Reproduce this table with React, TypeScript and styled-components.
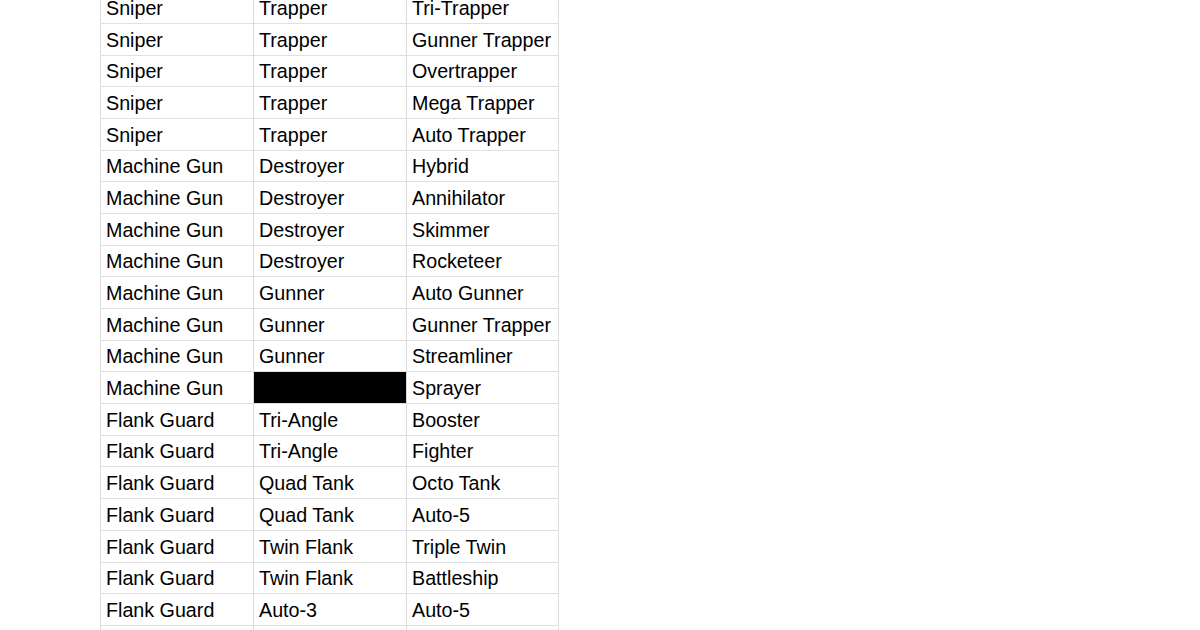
import React from "react";
import styled, { createGlobalStyle } from "styled-components";

const Global = createGlobalStyle`
  html, body { margin: 0; padding: 0; background: #ffffff; overflow: hidden; }
  body { font-family: "Liberation Sans", Arial, sans-serif; }
`;

const Page = styled.div`
  width: 1200px;
  height: 630px;
  overflow: hidden;
  background: #ffffff;
`;

const Sheet = styled.div`
  margin-top: -7.6px;
  margin-left: 100px;
  display: grid;
  grid-template-columns: 153px 153px 152px;
  width: max-content;
  border-left: 1px solid #dcdcdc;
`;

const Cell = styled.div<{ $redacted?: boolean }>`
  box-sizing: border-box;
  height: 31.68px;
  padding: 4.68px 0 4px 5px;
  border-bottom: 1px solid #e0e0e0;
  border-right: 1px solid #dcdcdc;
  font-family: "Liberation Sans", Arial, sans-serif;
  font-size: 19.7px;
  line-height: 22px;
  color: #000000;
  white-space: nowrap;
  overflow: hidden;
  background: ${(p) => (p.$redacted ? "#000000" : "transparent")};
`;

const rows: [string, string | null, string][] = [
  ["Sniper", "Trapper", "Tri-Trapper"],
  ["Sniper", "Trapper", "Gunner Trapper"],
  ["Sniper", "Trapper", "Overtrapper"],
  ["Sniper", "Trapper", "Mega Trapper"],
  ["Sniper", "Trapper", "Auto Trapper"],
  ["Machine Gun", "Destroyer", "Hybrid"],
  ["Machine Gun", "Destroyer", "Annihilator"],
  ["Machine Gun", "Destroyer", "Skimmer"],
  ["Machine Gun", "Destroyer", "Rocketeer"],
  ["Machine Gun", "Gunner", "Auto Gunner"],
  ["Machine Gun", "Gunner", "Gunner Trapper"],
  ["Machine Gun", "Gunner", "Streamliner"],
  ["Machine Gun", null, "Sprayer"],
  ["Flank Guard", "Tri-Angle", "Booster"],
  ["Flank Guard", "Tri-Angle", "Fighter"],
  ["Flank Guard", "Quad Tank", "Octo Tank"],
  ["Flank Guard", "Quad Tank", "Auto-5"],
  ["Flank Guard", "Twin Flank", "Triple Twin"],
  ["Flank Guard", "Twin Flank", "Battleship"],
  ["Flank Guard", "Auto-3", "Auto-5"],
  ["", "", ""],
];

export default function App() {
  return (
    <Page>
      <Global />
      <Sheet>
        {rows.map(([a, b, c], i) => (
          <React.Fragment key={i}>
            <Cell>{a}</Cell>
            <Cell $redacted={b === null}>{b ?? ""}</Cell>
            <Cell>{c}</Cell>
          </React.Fragment>
        ))}
      </Sheet>
    </Page>
  );
}
